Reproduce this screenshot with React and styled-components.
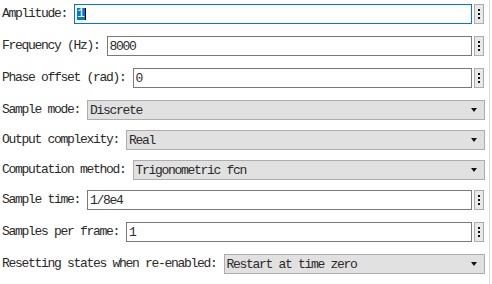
import React from "react";
import styled, { createGlobalStyle } from "styled-components";

const GlobalStyle = createGlobalStyle`
  html, body {
    margin: 0;
    padding: 0;
    background: #ffffff;
  }
  body {
    font-family: "Liberation Mono", "DejaVu Sans Mono", monospace;
    font-size: 13px;
    letter-spacing: -1.3px;
    color: #2a2a2a;
  }
`;

const params = [
  { label: "Amplitude:", kind: "edit", value: "1", focused: true },
  { label: "Frequency (Hz):", kind: "edit", value: "8000" },
  { label: "Phase offset (rad):", kind: "edit", value: "0" },
  { label: "Sample mode:", kind: "select", value: "Discrete" },
  { label: "Output complexity:", kind: "select", value: "Real" },
  { label: "Computation method:", kind: "select", value: "Trigonometric fcn" },
  { label: "Sample time:", kind: "edit", value: "1/8e4" },
  { label: "Samples per frame:", kind: "edit", value: "1" },
  { label: "Resetting states when re-enabled:", kind: "select", value: "Restart at time zero" },
];

export default function App() {
  return (
    <>
      <GlobalStyle />
      <Panel>
        <Form>
          {params.map((p) => (
            <Row key={p.label} $kind={p.kind}>
              <Label>{p.label}</Label>
              {p.kind === "edit" ? (
                <EditGroup>
                  <EditBox $focused={p.focused}>
                    {p.focused ? (
                      <>
                        <Selected>{p.value}</Selected>
                        <Caret />
                      </>
                    ) : (
                      p.value
                    )}
                  </EditBox>
                  <MoreBtn>
                    <svg width="2" height="10" viewBox="0 0 2 10">
                      <rect x="0" y="0" width="2" height="2" fill="#111" />
                      <rect x="0" y="4" width="2" height="2" fill="#111" />
                      <rect x="0" y="8" width="2" height="2" fill="#111" />
                    </svg>
                  </MoreBtn>
                </EditGroup>
              ) : (
                <Select>
                  <SelectText>{p.value}</SelectText>
                  <Arrow />
                </Select>
              )}
            </Row>
          ))}
        </Form>
      </Panel>
    </>
  );
}

const Panel = styled.div`
  width: 490px;
  height: 284px;
  border-right: 1px solid #dddddd;
  box-sizing: border-box;
`;

const Form = styled.div`
  display: flex;
  flex-direction: column;
  padding: 4px 5px 0 2px;
`;

const Row = styled.div`
  display: flex;
  align-items: center;
  gap: 7px;
  height: 20px;
  margin-bottom: ${(p) => (p.$kind === "edit" ? "12px" : "10px")};
`;

const Label = styled.span`
  white-space: nowrap;
  line-height: 20px;
`;

const EditGroup = styled.div`
  flex: 1;
  display: flex;
  gap: 2px;
  height: 20px;
`;

const EditBox = styled.div`
  flex: 1;
  display: flex;
  align-items: center;
  box-sizing: border-box;
  height: 20px;
  padding-left: 2px;
  border: 1px solid ${(p) => (p.$focused ? "#0078d7" : "#7a7a7a")};
  background: #ffffff;
  white-space: nowrap;
`;

const Selected = styled.span`
  background: #0078d7;
  color: #ffffff;
  line-height: 12px;
  letter-spacing: 0;
`;

const Caret = styled.span`
  width: 1px;
  height: 12px;
  background: #000000;
`;

const MoreBtn = styled.div`
  width: 10px;
  height: 20px;
  box-sizing: border-box;
  border: 1px solid #adadad;
  background: #e9e9e9;
  display: flex;
  align-items: center;
  justify-content: center;
`;

const Select = styled.div`
  flex: 1;
  display: flex;
  align-items: center;
  justify-content: space-between;
  box-sizing: border-box;
  height: 20px;
  padding: 0 7px 0 2px;
  border: 1px solid #adadad;
  background: #e1e1e1;
  margin-right: -1px;
`;

const SelectText = styled.span`
  white-space: nowrap;
`;

const Arrow = styled.span`
  width: 0;
  height: 0;
  border-left: 3px solid transparent;
  border-right: 3px solid transparent;
  border-top: 4px solid #111111;
`;
